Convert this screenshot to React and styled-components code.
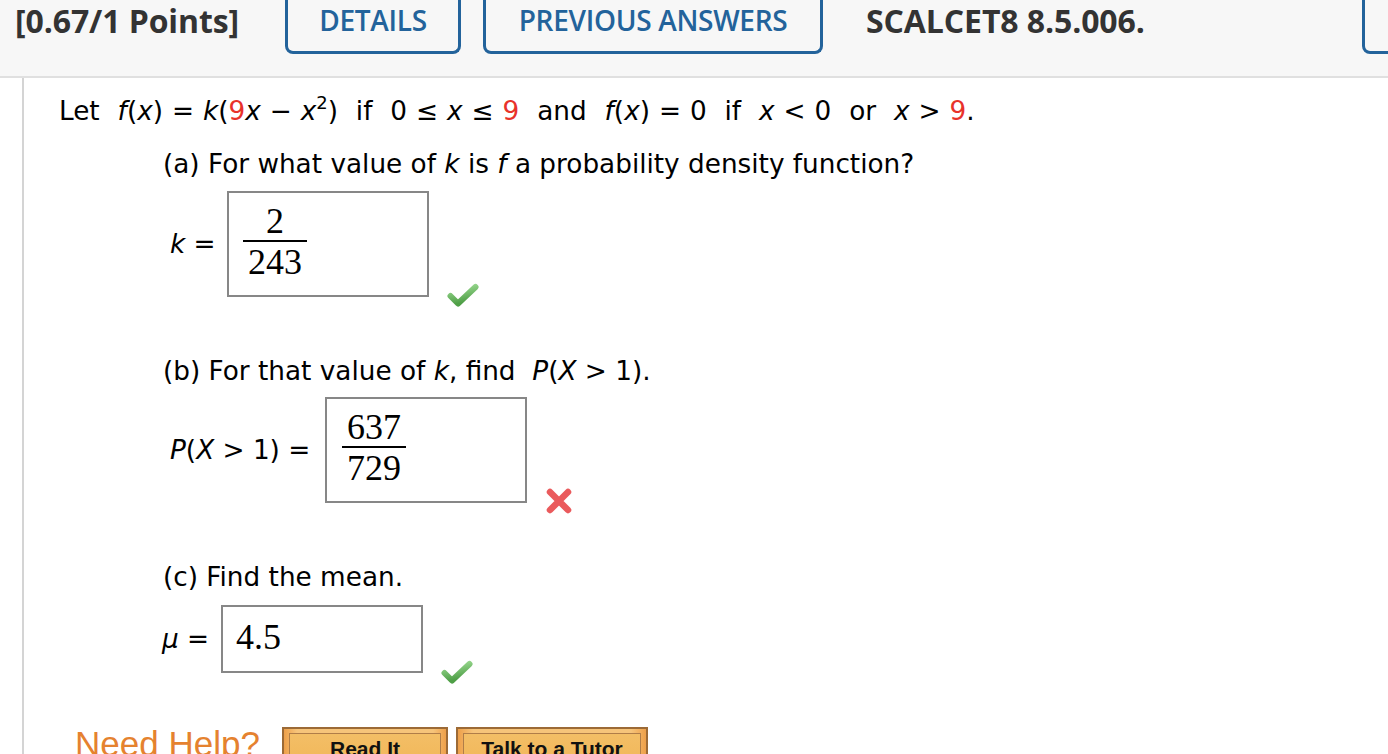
import React from "react";
import styled, { createGlobalStyle } from "styled-components";

const GlobalStyle = createGlobalStyle`
  body {
    margin: 0;
    background: #ffffff;
    overflow: hidden;
  }
`;

const Page = styled.div`
  width: 1388px;
  height: 754px;
  overflow: hidden;
  font-family: "DejaVu Sans", Verdana, sans-serif;
  color: #000;
`;

const Header = styled.div`
  display: flex;
  align-items: flex-start;
  height: 76px;
  background: #f7f7f7;
  border-bottom: 2px solid #e0e0e0;
  font-family: "Open Sans", sans-serif;
`;

const Title = styled.div`
  box-sizing: border-box;
  width: ${(p) => p.width}px;
  padding-left: ${(p) => p.pad || 0}px;
  margin-left: ${(p) => p.left || 0}px;
  font-size: 32px;
  font-weight: 700;
  letter-spacing: -0.1px;
  line-height: 42px;
  color: #333;
  white-space: nowrap;
  flex-shrink: 0;
`;

const Tab = styled.div`
  margin-left: ${(p) => p.left || 0}px;
  width: ${(p) => p.width}px;
  height: 54px;
  box-sizing: border-box;
  border: 3px solid #23639b;
  border-top: none;
  border-radius: 0 0 8px 8px;
  color: #23639b;
  font-size: 28px;
  font-weight: 600;
  letter-spacing: -0.3px;
  text-align: center;
  line-height: 40px;
  white-space: nowrap;
  flex-shrink: 0;
`;

const Body = styled.div`
  margin-left: 22px;
  border-left: 2px solid #d4d4d4;
  padding-left: 35px;
  padding-top: 16px;
  font-size: 26.3px;
  height: 660px;
`;

const Line = styled.div`
  white-space: nowrap;
  line-height: 34px;
  height: 34px;
  margin-left: ${(p) => p.indent || 0}px;
  margin-top: ${(p) => p.top || 0}px;
  word-spacing: ${(p) => p.spacing || 0}px;
`;

const I = styled.i`
  font-style: italic;
`;

const Red = styled.span`
  color: #e8322a;
`;

const Sup = styled.sup`
  font-size: 18px;
  vertical-align: 11px;
  line-height: 0;
`;

const AnswerRow = styled.div`
  display: flex;
  align-items: flex-start;
  height: ${(p) => p.h}px;
  margin-left: ${(p) => p.indent}px;
  margin-top: ${(p) => p.top}px;
`;

const Label = styled.div`
  white-space: nowrap;
  width: ${(p) => p.width}px;
  height: ${(p) => p.h}px;
  line-height: ${(p) => p.h}px;
  flex-shrink: 0;
`;

const Box = styled.div`
  width: 202px;
  height: ${(p) => p.h}px;
  box-sizing: border-box;
  border: 2px solid #878787;
  display: flex;
  align-items: ${(p) => (p.frac ? "flex-start" : "center")};
  padding: ${(p) => (p.frac ? "10px 0 0" : "0 0 4px")};
  padding-left: ${(p) => p.pad}px;
  font-family: "Liberation Serif", "Times New Roman", serif;
  font-size: 36px;
  flex-shrink: 0;
`;

const Frac = styled.div`
  display: inline-flex;
  flex-direction: column;
  align-items: center;
  line-height: 36px;
  padding: 0 5px;
`;

const Bar = styled.div`
  align-self: stretch;
  height: 2px;
  background: #000;
  margin: 1px -5px 2px;
`;

const Mark = styled.div`
  margin-left: ${(p) => p.left}px;
  margin-top: ${(p) => p.top}px;
  flex-shrink: 0;
  line-height: 0;
`;

const HelpRow = styled.div`
  display: flex;
  align-items: flex-start;
  margin-left: 16px;
  margin-top: 54px;
`;

const Help = styled.div`
  width: 207px;
  font-family: "Liberation Sans", Arial, sans-serif;
  font-size: 35px;
  color: #e5822f;
  line-height: 40px;
  margin-top: -3px;
  white-space: nowrap;
  flex-shrink: 0;
`;

const OrangeButton = styled.div`
  margin-left: ${(p) => p.left || 0}px;
  width: ${(p) => p.width}px;
  height: 44px;
  box-sizing: border-box;
  border: 2px solid #9c6a36;
  background: linear-gradient(90deg, #eea04a, #f6c47a 8%, #f6c47a 92%, #eea04a);
  padding: 4px 5px 0;
  flex-shrink: 0;
`;

const ButtonInner = styled.div`
  height: 100%;
  border: 1px solid #b07d48;
  border-bottom: none;
  background: linear-gradient(#f3be66, #f1b657);
  font-family: "Liberation Sans", Arial, sans-serif;
  font-weight: bold;
  font-size: 21px;
  text-align: center;
  line-height: 30px;
  color: #111;
  white-space: nowrap;
`;

const Check = () => (
  <svg width="32" height="26" viewBox="0 0 32 26">
    <defs>
      <linearGradient id="cg" x1="0" y1="0" x2="0.3" y2="1">
        <stop offset="0" stopColor="#9ddb93" />
        <stop offset="1" stopColor="#4f9f47" />
      </linearGradient>
    </defs>
    <path
      d="M3.5 13 L11 20.5 L28.5 4"
      fill="none"
      stroke="url(#cg)"
      strokeWidth="6"
      strokeLinecap="round"
      strokeLinejoin="round"
    />
  </svg>
);

const Cross = () => (
  <svg width="28" height="28" viewBox="0 0 28 28">
    <path
      d="M5 5 L23 23 M23 5 L5 23"
      fill="none"
      stroke="#ea5a5c"
      strokeWidth="6.5"
      strokeLinecap="round"
    />
  </svg>
);

export default function App() {
  return (
    <Page>
      <GlobalStyle />
      <Header>
        <Title width={285} pad={15}>
          [0.67/1 Points]
        </Title>
        <Tab width={176}>DETAILS</Tab>
        <Tab left={22} width={340}>
          PREVIOUS ANSWERS
        </Tab>
        <Title left={43} width={496}>
          SCALCET8 8.5.006.
        </Title>
        <Tab width={200} />
      </Header>
      <Body>
        <Line spacing={0.6}>
          Let&nbsp;&nbsp;<I>f</I>(<I>x</I>) = <I>k</I>(<Red>9</Red>
          <I>x</I> &minus; <I>x</I>
          <Sup>2</Sup>)&nbsp;&nbsp;if&nbsp;&nbsp;0 &le; <I>x</I> &le; <Red>9</Red>
          &nbsp;&nbsp;and&nbsp;&nbsp;<I>f</I>(<I>x</I>) = 0&nbsp;&nbsp;if&nbsp;&nbsp;
          <I>x</I> &lt; 0&nbsp;&nbsp;or&nbsp;&nbsp;<I>x</I> &gt; <Red>9</Red>.
        </Line>
        <Line indent={104} top={19}>
          (a) For what value of <I>k</I> is <I>f</I> a probability density function?
        </Line>
        <AnswerRow indent={111} top={10} h={106}>
          <Label width={57} h={106}>
            <I>k</I> =
          </Label>
          <Box h={106} pad={14} frac>
            <Frac>
              <span>2</span>
              <Bar />
              <span>243</span>
            </Frac>
          </Box>
          <Mark left={18} top={92}>
            <Check />
          </Mark>
        </AnswerRow>
        <Line indent={104} top={57}>
          (b) For that value of <I>k</I>, find&nbsp;&nbsp;<I>P</I>(<I>X</I> &gt; 1).
        </Line>
        <AnswerRow indent={111} top={9} h={106}>
          <Label width={155} h={106}>
            <I>P</I>(<I>X</I> &gt; 1) =
          </Label>
          <Box h={106} pad={15} frac>
            <Frac>
              <span>637</span>
              <Bar />
              <span>729</span>
            </Frac>
          </Box>
          <Mark left={18} top={90}>
            <Cross />
          </Mark>
        </AnswerRow>
        <Line indent={104} top={57}>
          (c) Find the mean.
        </Line>
        <AnswerRow indent={103} top={11} h={68}>
          <Label width={59} h={68}>
            <I>&mu;</I> =
          </Label>
          <Box h={68} pad={13}>
            4.5
          </Box>
          <Mark left={18} top={55}>
            <Check />
          </Mark>
        </AnswerRow>
        <HelpRow>
          <Help>Need Help?</Help>
          <OrangeButton width={166}>
            <ButtonInner>Read It</ButtonInner>
          </OrangeButton>
          <OrangeButton left={8} width={192}>
            <ButtonInner>Talk to a Tutor</ButtonInner>
          </OrangeButton>
        </HelpRow>
      </Body>
    </Page>
  );
}
